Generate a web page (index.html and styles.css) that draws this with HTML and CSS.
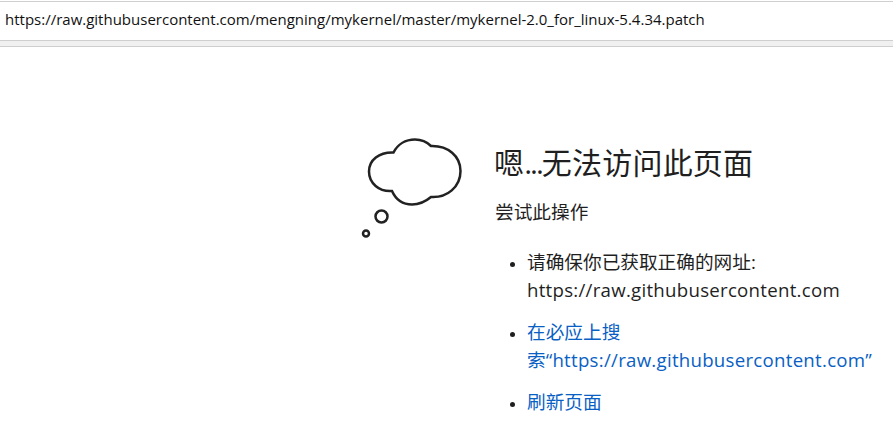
FILE: index.html
```html
<!DOCTYPE html>
<html lang="zh-CN">
<head>
<meta charset="utf-8">
<title>无法访问此页面</title>
<link rel="stylesheet" href="styles.css">
</head>
<body>
<header class="address-bar">https://raw.githubusercontent.com/mengning/mykernel/master/mykernel-2.0_for_linux-5.4.34.patch</header>
<div class="strip"></div>
<main class="page">
  <svg class="cloud" width="110" height="110" viewBox="360 135 110 110" aria-hidden="true">
    <path d="M393.500 152.500C397.500 144.500 405.500 139.500 415 139.500C422 139.500 427 142 431 146C448 145.500 460.500 156 460.500 171C460.500 187 447 198 431 197C425 202 419 204.500 412 204.500C403 204.500 396 200 392 191C379 192 369 183 369 171.500C369 160 379 152 393.500 152.500Z"/>
    <circle cx="381.500" cy="216.500" r="6"/>
    <circle cx="366" cy="233.500" r="3"/>
  </svg>
  <section class="message">
    <h1>嗯<span class="dots">...</span>无法访问此页面</h1>
    <p class="try">尝试此操作</p>
    <ul>
      <li>请确保你已获取正确的网址:<br><span class="latin">https://raw.githubusercontent.com</span></li>
      <li><a href="#">在必应上搜<span class="keep">索<span class="latin">“https://raw.githubusercontent.com”</span></span></a></li>
      <li><a href="#">刷新页面</a></li>
    </ul>
  </section>
</main>
</body>
</html>
```
FILE: styles.css
```css
html, body {
  margin: 0;
  padding: 0;
  height: 427px;
  overflow: hidden;
  background: #fff;
  color: #1f1f1f;
  font-family: "Open Sans", "Noto Sans CJK SC", sans-serif;
}
.address-bar {
  box-sizing: border-box;
  height: 40px;
  margin-top: 1px;
  padding: 7px 0 0 5px;
  border-top: 1px solid #cfcfcf;
  border-bottom: 1px solid #cfcfcf;
  font-size: 15px;
  line-height: 20px;
  color: #111;
  white-space: nowrap;
}
.strip {
  box-sizing: border-box;
  height: 6px;
  background: #f0f0f0;
  border-bottom: 1px solid #cfcfcf;
}
.page {
  display: flex;
  padding: 88px 0 0 360px;
}
.cloud {
  flex: none;
  margin-right: 25px;
}
.cloud path, .cloud circle {
  fill: none;
  stroke: #222;
  stroke-width: 2.500;
}
.message {
  width: 386px;
}
h1 {
  margin: 8px 0 0 -1px;
  font-size: 30px;
  line-height: 40px;
  font-weight: 400;
  letter-spacing: 0.200px;
}
.dots {
  letter-spacing: -2px;
}
.try {
  margin: 15px 0 0;
  font-size: 18.670px;
  line-height: 28px;
}
ul {
  margin: 22px 0 0;
  padding: 0 0 0 32px;
  font-size: 18.670px;
  line-height: 28px;
}
li {
  margin-bottom: 14px;
}
li::marker {
  font-size: 15px;
}
.latin {
  letter-spacing: 0.260px;
}
.keep {
  white-space: nowrap;
}
a {
  color: #0a5fc4;
  text-decoration: none;
}
```
